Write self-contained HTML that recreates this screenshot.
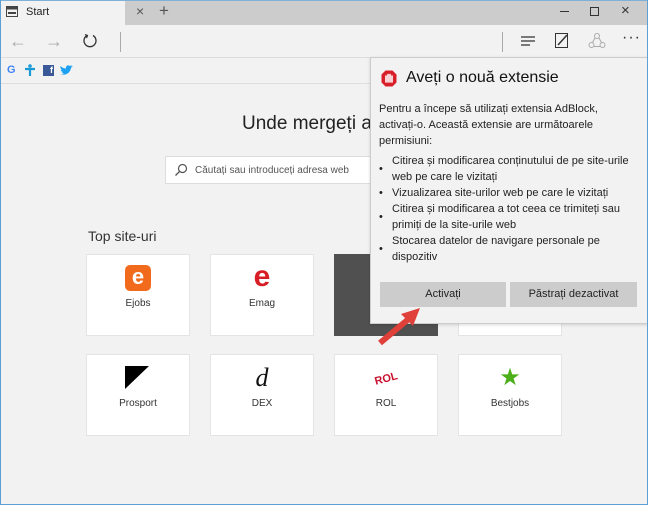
<!DOCTYPE html>
<html><head><meta charset="utf-8"><style>
*{margin:0;padding:0;box-sizing:border-box}
body{width:648px;height:505px;position:relative;overflow:hidden;background:#f2f2f2;font-family:"Liberation Sans",sans-serif;color:#222}
.abs{position:absolute}
.tile{position:absolute;width:104px;height:82px;background:#fff;border:1px solid #e4e4e4;font-size:10px;color:#333;text-align:center}
.tile .lbl{position:absolute;left:0;right:0;top:43px}
.tile .ic{position:absolute;left:38px;top:10px;width:26px;height:26px}
.pl{position:relative;padding-left:13px}
.pl span{position:absolute;left:0;top:8px}
</style></head><body>
<div class="abs" style="left:0;top:0;width:648px;height:25px;background:#cccccc;border-top:1px solid #7fb0d8"></div>
<div class="abs" style="left:1px;top:1px;width:124px;height:24px;background:#f2f2f2"></div>
<svg class="abs" style="left:6px;top:6px" width="12" height="11"><rect x="0.5" y="0.5" width="11" height="10" fill="none" stroke="#444"/><rect x="0.5" y="0.5" width="11" height="3" fill="#444"/><rect x="2" y="6" width="8" height="2" fill="#444"/></svg>
<div class="abs" style="left:26px;top:6px;font-size:11px">Start</div>
<div class="abs" style="left:136px;top:3px;font-size:14px;color:#555">×</div>
<div class="abs" style="left:159px;top:1px;font-size:17px;color:#555">+</div>
<div class="abs" style="left:560px;top:11px;width:9px;height:1px;background:#333"></div>
<div class="abs" style="left:590px;top:7px;width:9px;height:9px;border:1px solid #333"></div>
<div class="abs" style="left:621px;top:2px;font-size:15px;color:#333">×</div>
<div class="abs" style="left:0;top:25px;width:648px;height:33px;background:#f2f2f2;border-bottom:1px solid #ddd"></div>
<div class="abs" style="left:9px;top:31px;font-size:18px;color:#aaa">←</div>
<div class="abs" style="left:45px;top:31px;font-size:18px;color:#aaa">→</div>
<svg class="abs" style="left:82px;top:33px" width="16" height="16"><path d="M5 2.5 A6 6 0 1 0 11 2.5" fill="none" stroke="#333" stroke-width="1.3"/><path d="M3 1.5 L5.5 2.5 L4.5 5" fill="none" stroke="#333" stroke-width="1.2"/></svg>
<div class="abs" style="left:120px;top:32px;width:1px;height:20px;background:#aaa"></div>
<div class="abs" style="left:502px;top:32px;width:1px;height:20px;background:#aaa"></div>
<svg class="abs" style="left:520px;top:35px" width="16" height="12"><path d="M1 2H15M1 6H15M1 10H10" stroke="#333" stroke-width="1.2"/></svg>
<svg class="abs" style="left:554px;top:32px" width="16" height="18"><rect x="1.5" y="1.5" width="12" height="14" fill="none" stroke="#333"/><path d="M4 13 L13 3" stroke="#333" stroke-width="1.5"/></svg>
<svg class="abs" style="left:588px;top:32px" width="18" height="18"><circle cx="9" cy="4" r="2.5" fill="none" stroke="#aaa"/><circle cx="3.5" cy="13" r="2.5" fill="none" stroke="#aaa"/><circle cx="14.5" cy="13" r="2.5" fill="none" stroke="#aaa"/><path d="M7 6 L4.5 10.5 M11 6 L13.5 10.5 M6 14.5 H12" stroke="#aaa"/></svg>
<div class="abs" style="left:622px;top:29px;font-size:16px;color:#333;letter-spacing:1px">···</div>
<div class="abs" style="left:0;top:59px;width:648px;height:25px;background:#f2f2f2;border-bottom:1px solid #ddd"></div>
<div class="abs" style="left:7px;top:64px;font-size:11px;font-weight:bold;color:#4285f4">G</div>
<svg class="abs" style="left:24px;top:64px" width="12" height="13"><circle cx="6" cy="2" r="1.8" fill="#1a9ad6"/><path d="M1 5H11M6 4V12" stroke="#1a9ad6" stroke-width="2.2"/></svg>
<div class="abs" style="left:43px;top:65px;width:11px;height:11px;background:#3b5998;color:#fff;font-size:9px;font-weight:bold;text-align:right;padding-right:1px">f</div>
<svg class="abs" style="left:60px;top:65px" width="13" height="11"><path d="M0 9 C4 11 10 9 11 3 L13 1 L11 1.5 L12 0 L10 1 C8 -0.5 5.5 1 6 3.5 C3.5 3.5 1.5 2 0.5 1 C0 3 1 4.5 2 5 L0.8 4.8 C1 6.3 2.3 7 3 7.2 L1.8 7.3 C2.3 8.3 3.5 8.7 4 8.7 C3 9.5 1.5 9.5 0 9Z" fill="#1da1f2"/></svg>
<div class="abs" style="left:242px;top:113px;font-size:19px;color:#222;white-space:nowrap">Unde mergeți acum?</div>
<div class="abs" style="left:165px;top:156px;width:330px;height:28px;background:#fff;border:1px solid #ddd"></div>
<svg class="abs" style="left:174px;top:163px" width="14" height="14"><circle cx="8.5" cy="5.5" r="4" fill="none" stroke="#555" stroke-width="1.2"/><path d="M5.5 8.5 L1.5 12.5" stroke="#555" stroke-width="1.3"/></svg>
<div class="abs" style="left:195px;top:165px;font-size:10px;color:#555">Căutați sau introduceți adresa web</div>
<div class="abs" style="left:88px;top:228px;font-size:14px;color:#333">Top site-uri</div>

<div class="tile" style="left:86px;top:254px"><div class="ic" style="background:#f26b1d;border-radius:5px;color:#fff;font-size:22px;font-weight:bold;line-height:24px">e</div><div class="lbl">Ejobs</div></div>
<div class="tile" style="left:210px;top:254px"><div class="ic" style="color:#d81e25;font-size:30px;font-weight:bold;line-height:24px">e</div><div class="lbl">Emag</div></div>
<div class="abs" style="left:334px;top:254px;width:104px;height:82px;background:#505050"></div>
<div class="tile" style="left:458px;top:254px"></div>

<div class="tile" style="left:86px;top:354px"><svg class="ic" width="26" height="26"><path d="M0 1H24L0 24Z" fill="#000"/></svg><div class="lbl">Prosport</div></div>
<div class="tile" style="left:210px;top:354px"><div class="ic" style="font-family:'Liberation Serif',serif;font-style:italic;font-size:26px;line-height:26px;color:#111">d</div><div class="lbl">DEX</div></div>
<div class="tile" style="left:334px;top:354px"><div class="ic" style="color:#c8102e;font-size:11px;font-weight:bold;line-height:28px;transform:rotate(-15deg)">ROL</div><div class="lbl">ROL</div></div>
<div class="tile" style="left:458px;top:354px"><div class="ic" style="color:#4caf1a;font-size:24px;line-height:26px">★</div><div class="lbl">Bestjobs</div></div>

<div class="abs" style="left:370px;top:57px;width:278px;height:267px;background:#f2f2f2;border:1px solid #ccc;box-shadow:0 1px 3px rgba(0,0,0,.15)"></div>
<svg class="abs" style="left:381px;top:70px" width="16" height="17"><path d="M4.5 0.5H11.5L15.5 4.5V12.5L11.5 16.5H4.5L0.5 12.5V4.5Z" fill="#d9202a"/><path d="M5 12V6M7 12V4.5M9 12V4.5M11 12V6" stroke="#fff" stroke-width="1.6" stroke-linecap="round"/></svg>
<div class="abs" style="left:406px;top:69px;font-size:16px;color:#111">Aveți o nouă extensie</div>
<div class="abs" style="left:379px;top:101px;width:252px;font-size:11px;line-height:16px;color:#222">Pentru a începe să utilizați extensia AdBlock, activați-o. Această extensie are următoarele permisiuni:</div>
<div class="abs" style="left:379px;top:153px;width:250px;font-size:11px;line-height:16px;color:#222">
<div class="pl">Citirea și modificarea conținutului de pe site-urile web pe care le vizitați<span>•</span></div>
<div class="pl">Vizualizarea site-urilor web pe care le vizitați<span style="top:0">•</span></div>
<div class="pl">Citirea și modificarea a tot ceea ce trimiteți sau primiți de la site-urile web<span>•</span></div>
<div class="pl">Stocarea datelor de navigare personale pe dispozitiv<span>•</span></div>
</div>
<div class="abs" style="left:380px;top:282px;width:126px;height:25px;background:#cccccc;font-size:11px;text-align:center;line-height:25px">Activați</div>
<div class="abs" style="left:510px;top:282px;width:127px;height:25px;background:#cccccc;font-size:11px;text-align:center;line-height:25px">Păstrați dezactivat</div>
<svg class="abs" style="left:375px;top:305px" width="50" height="42"><path d="M5 38 L36 12" stroke="#e0403a" stroke-width="6"/><path d="M45 3 L26 9 L38 21 Z" fill="#e0403a"/></svg>
<div class="abs" style="left:647px;top:0;width:1px;height:505px;background:#5fa0d4"></div>
<div class="abs" style="left:0;top:504px;width:648px;height:1px;background:#5fa0d4"></div>
<div class="abs" style="left:0;top:0;width:1px;height:505px;background:#5fa0d4"></div>
</body></html>
